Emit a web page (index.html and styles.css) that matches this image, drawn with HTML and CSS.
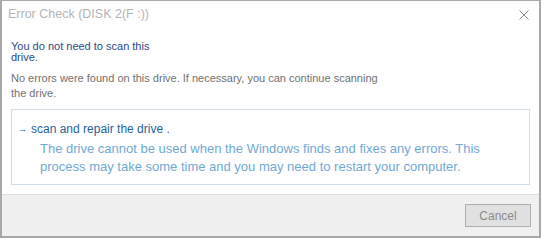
FILE: index.html
```
<!DOCTYPE html>
<html>
<head>
<meta charset="utf-8">
<link rel="stylesheet" href="styles.css">
</head>
<body>
<div class="window">
  <div class="titlebar">
    <span class="title">Error Check (DISK 2(F :))</span>
    <svg class="close" width="10" height="10" viewBox="0 0 10 10"><path d="M0.5 0.5L9.5 9.5M9.5 0.5L0.5 9.5" stroke="#8a8a8a" stroke-width="1" fill="none"/></svg>
  </div>
  <div class="content">
    <p class="headline">You do not need to scan this drive.</p>
    <p class="info">No errors were found on this drive. If necessary, you can continue scanning the drive.</p>
    <div class="option">
      <div class="option-title"><span class="arrow">&#8594;</span>scan and repair the drive .</div>
      <div class="option-desc">The drive cannot be used when the Windows finds and fixes any errors. This process may take some time and you may need to restart your computer.</div>
    </div>
  </div>
  <div class="footer">
    <button class="btn">Cancel</button>
  </div>
</div>
</body>
</html>
```
FILE: styles.css
```
* { box-sizing: border-box; }
html, body { margin: 0; padding: 0; background: #ffffff; }
body { font-family: "Liberation Sans", Arial, sans-serif; width: 542px; height: 239px; overflow: hidden; }
.window {
  width: 541px;
  height: 238px;
  border-left: 2px solid #a8a8a8;
  border-right: 2px solid #a8a8a8;
  border-top: 1px solid #a8a8a8;
  border-bottom: 2px solid #a8a8a8;
  display: flex;
  flex-direction: column;
  background: #fff;
}
.titlebar {
  height: 30px;
  display: flex;
  align-items: flex-start;
  justify-content: space-between;
  padding: 5px 10px 0 6px;
}
.title { font-size: 12.5px; color: #b4b4b4; line-height: 16px; }
.close { margin-top: 4px; }
.content { padding: 10px 9px 0 9px; flex: 1; }
.headline {
  margin: 0;
  width: 160px;
  font-size: 11px;
  line-height: 11px;
  color: #2b4a88;
}
.info {
  margin: 8px 0 0 0;
  width: 375px;
  font-size: 11px;
  line-height: 15px;
  color: #707070;
}
.option {
  margin-top: 8px;
  border: 1px solid #cfdde6;
  padding: 12px 0 8px 6px;
  width: 519px;
}
.option-title { font-size: 12px; color: #1f5f9c; line-height: 14px; display: flex; align-items: center; }
.arrow { font-size: 9px; margin-right: 4px; }
.option-desc {
  padding-left: 22px;
  margin-top: 4px;
  font-size: 13px;
  line-height: 18px;
  color: #6fa9d6;
  width: 480px;
}
.footer {
  height: 42px;
  background: #f0f0f0;
  border-top: 1px solid #dcdcdc;
  display: flex;
  justify-content: flex-end;
  align-items: flex-start;
  padding: 9px 8px 0 0;
}
.btn {
  width: 66px;
  height: 23px;
  background: #e1e1e1;
  border: 1px solid #adadad;
  font-family: "Liberation Sans", Arial, sans-serif;
  font-size: 12px;
  color: #8a8a8a;
  padding: 0;
}
```
